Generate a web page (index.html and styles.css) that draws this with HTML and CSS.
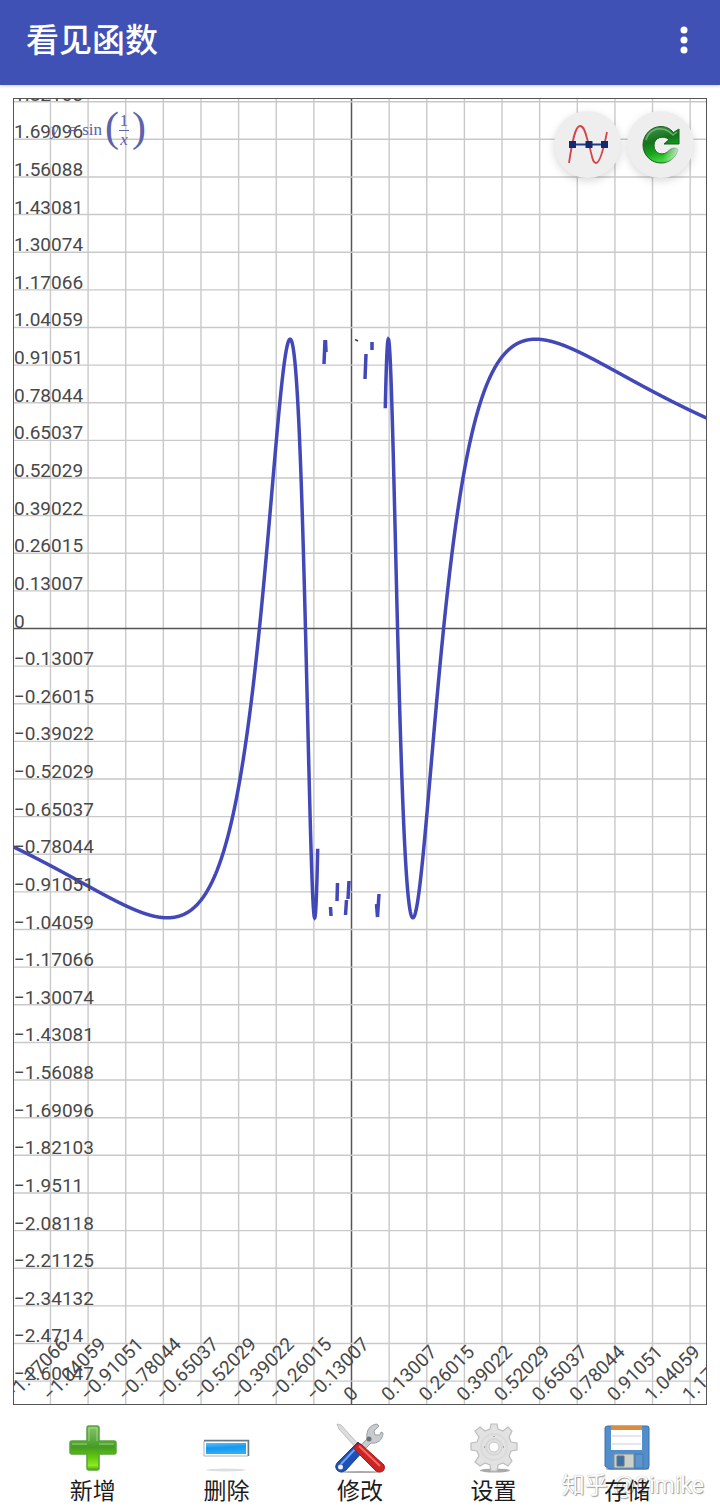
FILE: index.html
```html
<!DOCTYPE html>
<html lang="zh-CN">
<head>
  <meta charset="UTF-8" />
  <meta name="viewport" content="width=device-width, initial-scale=1.0" />
  <title>看见函数</title>
  <link rel="stylesheet" href="styles.css">
</head>
<body>
  <header class="topbar">
    <h1>看见函数</h1>
    <button type="button" class="menu" aria-label="更多">
      <svg width="10" height="30" viewBox="0 0 10 30" fill="#fff">
        <circle cx="5" cy="5" r="3.5" />
        <circle cx="5" cy="15" r="3.5" />
        <circle cx="5" cy="25" r="3.5" />
      </svg>
    </button>
  </header>

  <main class="plot">
    <svg id="grafico" viewBox="0 0 694 1307" role="img" aria-label="y = sin(1/x)"></svg>

    <div class="formula">
      <i>y</i><span class="eq">=</span><span>sin</span>
      <span class="paren">(</span>
      <span class="frac"><span>1</span><i>x</i></span>
      <span class="paren">)</span>
    </div>

    <div class="fabs">
      <button type="button" class="fab" aria-label="零点">
        <svg width="40" height="40" viewBox="0 0 40 40">
          <path d="M1 38C4 18 7 1 12 1S18 11 21 20S24 38 28 38S36 22 39 7" fill="none" stroke="#d2454c" stroke-width="1.8" />
          <path d="M4 19.500H36" stroke="#1d3c8c" stroke-width="2" />
          <path d="M1 16h7v7H1zM17.500 16h7v7h-7zM33 16h7v7h-7z" fill="#14296f" />
        </svg>
      </button>
      <button type="button" class="fab" aria-label="刷新">
        <svg width="40" height="40" viewBox="0 0 40 40">
          <defs>
            <linearGradient id="verde" x1="0" y1="0" x2="0.300" y2="1">
              <stop offset="0" stop-color="#4f9a55" />
              <stop offset="0.450" stop-color="#14731c" />
              <stop offset="0.750" stop-color="#16a51c" />
              <stop offset="1" stop-color="#3fd63a" />
            </linearGradient>
            <linearGradient id="cauda" x1="0" y1="0" x2="1" y2="0">
              <stop offset="0" stop-color="#eee" stop-opacity="0" />
              <stop offset="1" stop-color="#eee" stop-opacity="0.900" />
            </linearGradient>
          </defs>
          <path d="M38 4v15H23l5-4.500C23 10 13 12 13 20.500c0 9 10 11 15 5 3-3 7-3 9-1C35 33 28 38 20 38 10 38 2 30 2 20S10 1.500 20 1.500c5 0 9 2 12.500 6z" fill="url(#verde)" stroke="#17601d" stroke-width="1" />
          <path d="M5 15C7 7 14 3 21 4c5 .5 8 3 11 6l4-3" fill="none" stroke="#8bc78e" stroke-width="1.500" opacity="0.700" />
          <path d="M22 22h18v17H22z" fill="url(#cauda)" />
        </svg>
      </button>
    </div>
  </main>

  <nav class="toolbar">
    <button type="button" class="tool">
      <svg width="52" height="52" viewBox="0 0 52 52">
        <defs>
          <linearGradient id="mais" x1="0" y1="0" x2="0" y2="1">
            <stop offset="0" stop-color="#86c56c" />
            <stop offset="0.480" stop-color="#459b22" />
            <stop offset="0.700" stop-color="#60c70d" />
            <stop offset="0.900" stop-color="#8cec1c" />
            <stop offset="1" stop-color="#4f971e" />
          </linearGradient>
        </defs>
        <path d="M22 4h8q2 0 2 2v13h15q2 0 2 2v9q0 2-2 2H32v14q0 2-2 2h-8q-2 0-2-2V32H5q-2 0-2-2v-9q0-2 2-2h15V6q0-2 2-2z" fill="url(#mais)" stroke="#58a33a" stroke-width="1.500" />
        <path d="M22 19V6h8v13M5 22h15M32 22h15" fill="none" stroke="#aedb98" stroke-width="1" opacity="0.800" />
      </svg>
      <span>新增</span>
    </button>
    <button type="button" class="tool">
      <svg width="52" height="52" viewBox="0 0 52 52">
        <defs>
          <linearGradient id="menos" x1="0" y1="0" x2="0.200" y2="1">
            <stop offset="0" stop-color="#57c0fb" />
            <stop offset="0.500" stop-color="#1598ef" />
            <stop offset="1" stop-color="#2eaefa" />
          </linearGradient>
        </defs>
        <path d="M4 19h44v15H4z" fill="#fff" stroke="#a7b4bd" stroke-width="1" />
        <path d="M4 18.500h44.500V34" fill="none" stroke="#667887" stroke-width="1.500" />
        <path d="M6 21h40v11H6z" fill="url(#menos)" />
        <ellipse cx="26" cy="48" rx="20" ry="1.500" fill="#dedede" />
      </svg>
      <span>删除</span>
    </button>
    <button type="button" class="tool">
      <svg width="52" height="52" viewBox="0 0 52 52">
        <ellipse cx="27" cy="50" rx="21" ry="1" fill="#aaa" />
        <path d="M3 2l4 1 19 21-3 3L5 7z" fill="#dcdcdc" stroke="#b4b4b4" stroke-width="0.800" />
        <path d="M26 24l7-7c-1-8 2-14 10-15l2 2-5 5 1 4 5 0 1-3 2 1c0 7-6 11-12 10l-8 8z" fill="#c9cccf" stroke="#999fa4" stroke-width="1" />
        <circle cx="35" cy="17" r="2.500" fill="#6d7276" />
        <path d="M24 20l7 7-19 21q-5 4-9 0-3-4 1-8z" fill="#1e51b8" stroke="#173f95" stroke-width="1" />
        <path d="M24 24L7 42" stroke="#6fa0ef" stroke-width="2" />
        <circle cx="6.500" cy="45" r="2.500" fill="#eef3fb" />
        <path d="M21 24q4-5 8 0l21 19q2 7-5 7-3 0-5-3L22 29q-3-2-1-5z" fill="#cf2222" stroke="#a51b1b" stroke-width="1" />
        <path d="M25 24l21 20" stroke="#ee6c66" stroke-width="2" />
      </svg>
      <span>修改</span>
    </button>
    <button type="button" class="tool">
      <svg width="52" height="52" viewBox="0 0 52 52">
        <ellipse cx="27" cy="48.500" rx="15" ry="2" fill="#a9a9a9" />
        <path d="M22 7L23 2h6l1 5 5 2 5-4 4 4-3 6 2 5 6 1v7l-6 1-2 5 3 5-4 5-5-3-5 2-1 6h-6l-1-6-5-2-5 3-5-4 4-6-2-5-6-1v-7l6-1 2-5-4-6 5-4 5 4z" fill="#e2e2e2" stroke="#bdbdbd" stroke-width="1.200" />
        <circle cx="26" cy="25" r="13" fill="none" stroke="#dadada" stroke-width="2" />
        <circle cx="26" cy="25" r="8" fill="none" stroke="#d6d6d6" stroke-width="2" />
        <circle cx="26" cy="25" r="5" fill="#fff" stroke="#c4c4c4" />
        <path d="M16 25h1M35 25h1M26 14v1" stroke="#aaa" stroke-width="2" />
      </svg>
      <span>设置</span>
    </button>
    <button type="button" class="tool">
      <svg width="52" height="52" viewBox="0 0 52 52">
        <rect x="5" y="45" width="43" height="3" rx="1" fill="#c2c2c2" />
        <path d="M7 4h39q2 0 2 2v38q0 3-3 3H8l-4-3V6q0-2 3-2z" fill="#528dcc" stroke="#3f6fa8" />
        <path d="M10 4h31v4H10z" fill="#d98d43" />
        <path d="M10 8h31v20H10z" fill="#fff" />
        <path d="M11 14h29M11 22h29" stroke="#c8d0da" stroke-width="1" />
        <path d="M13 32h20v14H13z" fill="#cdd0c7" stroke="#808d91" />
        <path d="M16 34h7v10h-7z" fill="#3e6ea6" stroke="#62777f" />
        <path d="M34 32h8v14h-8z" fill="#5f95cd" stroke="#4679b2" />
      </svg>
      <span>存储</span>
    </button>
    <p class="marca">知乎 @Cimike</p>
  </nav>

  <script src="plot.js"></script>
</body>
</html>
```

FILE: styles.css
```css
* {
  box-sizing: border-box;
}

body {
  margin: 0;
  background: #fff;
  color: #222;
  font-family: Roboto, "Noto Sans CJK SC", sans-serif;
}

button {
  padding: 0;
  border: none;
  background: none;
  color: inherit;
  font-family: inherit;
  cursor: pointer;
}

svg {
  display: block;
}

.topbar {
  display: flex;
  align-items: center;
  justify-content: space-between;
  height: 85px;
  padding: 0 26px;
  background: #3f51b5;
  color: #fff;
  box-shadow: 0 1px 3px rgba(63, 81, 181, 0.3);
}

.topbar h1 {
  margin: 0;
  padding-bottom: 4px;
  font-size: 33px;
  line-height: 48px;
  font-weight: 500;
}

.menu {
  padding: 0 5px 6px;
}

.plot {
  position: relative;
  margin: 13px 13px 0;
}

#grafico {
  width: 100%;
  height: auto;
}

.grid {
  stroke: #c9c9c9;
  stroke-width: 1.4;
}

.axis {
  stroke: #555;
  stroke-width: 1.5;
}

.frame {
  fill: none;
  stroke: #555;
  stroke-width: 1;
}

.curve {
  fill: none;
  stroke: #4248b8;
  stroke-width: 3.5;
}

.speck {
  stroke: #444;
  stroke-width: 1.5;
}

.tick {
  fill: #484848;
  font-family: Roboto, sans-serif;
  font-size: 19px;
}

/* formula e botões por cima do gráfico */
.formula {
  position: absolute;
  top: 8px;
  left: 38px;
  display: flex;
  align-items: center;
  height: 48px;
  color: #5c62ac;
  font-family: "Liberation Serif", serif;
  font-size: 17px;
  line-height: 18px;
}

.formula .eq {
  padding: 0 5px 0 9px;
}

.formula .paren {
  width: 14px;
  padding-bottom: 6px;
  font-size: 42px;
  line-height: 42px;
  text-align: center;
}

.frac {
  display: flex;
  flex-direction: column;
  align-items: center;
  width: 10px;
}

.formula .paren:first-of-type,
.formula span + .paren {
  margin-left: 3px;
}

.frac span {
  width: 100%;
  border-bottom: 1px solid #5c62ac;
  text-align: center;
}

.fabs {
  position: absolute;
  top: 13px;
  right: 13px;
  display: flex;
  gap: 6px;
}

.fab {
  display: grid;
  place-items: center;
  width: 67px;
  height: 67px;
  border-radius: 50%;
  background: #eee;
  box-shadow: 0 3px 9px rgba(0, 0, 0, 0.15);
}

.toolbar {
  position: relative;
  display: flex;
  padding: 17px 26px 0;
}

.tool {
  position: relative;
  z-index: 1;
  flex: 1;
  display: flex;
  flex-direction: column;
  align-items: center;
  font-size: 23px;
  line-height: 36px;
  color: #1c1c1c;
}

.marca {
  position: absolute;
  right: 16px;
  bottom: 8px;
  margin: 0;
  color: #fff;
  font-size: 23px;
  line-height: 32px;
  text-shadow: 1px 1px 1px #999, 0 0 1px #999;
}
```

FILE: plot.js
```js
const svg = document.getElementById("grafico");
const W = 694;
const H = 1307;
const OX = 338.5;
const OY = 530.5;
const PASSO = 37.63;
const VALOR = 0.13007355;
const ESCALA = PASSO / VALOR;

function rotulo(k) {
  const texto = String(Number(Math.abs(k * VALOR).toFixed(5)));
  return k < 0 ? "−" + texto : texto;
}

function ramo(x0, x1) {
  let d = "";
  for (let i = 0; i <= 1500; i++) {
    const x = x0 + (x1 - x0) * i / 1500;
    const y = OY - Math.sin(ESCALA / (x - OX)) * ESCALA;
    d += (i ? "L" : "M") + x.toFixed(2) + " " + y.toFixed(2);
  }
  return d;
}

let grade = "";
let textos = "";

for (let k = -9; k <= 9; k++) {
  const x = OX + k * PASSO;
  grade += `<path class="${k ? "grid" : "axis"}" d="M${x} 0V${H}"/>`;
  textos += `<text class="tick" transform="translate(${x} 1304) rotate(-45)">${rotulo(k)}</text>`;
}

for (let k = -20; k <= 14; k++) {
  const y = OY - k * PASSO;
  grade += `<path class="${k ? "grid" : "axis"}" d="M0 ${y}H${W}"/>`;
  textos += `<text class="tick" x="1" y="${y - 1}">${rotulo(k)}</text>`;
}

// trechos soltos perto de x = 0, onde a função oscila demais
const trechos = [
  "M312 242L311 266M312.500 242L313 254",
  "M359 244V252",
  "M353 256L352 281",
  "M324.500 785L324 803",
  "M317.500 809L318 818",
  "M336 783L335 801",
  "M333.500 802L332.500 817",
  "M366 796L364.500 819M363.500 806L364.500 819"
];

const curva = ramo(0, 304.7) + ramo(372.3, W) + trechos.join("");

svg.innerHTML = grade +
  `<path class="curve" d="${curva}"/>` +
  `<path class="speck" d="M342 241.500L345 243"/>` +
  textos +
  `<rect class="frame" x="0.5" y="0.5" width="${W - 1}" height="${H - 1}"/>`;
```
